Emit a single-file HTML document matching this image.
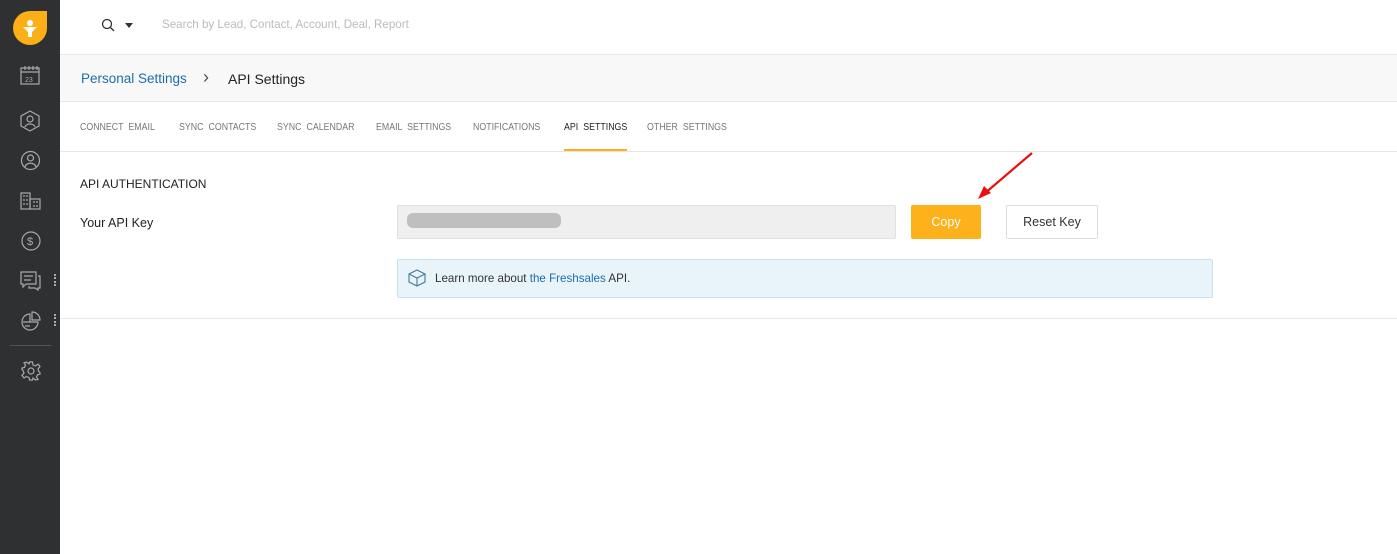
<!DOCTYPE html>
<html><head><meta charset="utf-8"><style>
*{box-sizing:border-box;margin:0;padding:0}
body{width:1397px;height:554px;overflow:hidden;font-family:"Liberation Sans",sans-serif;background:#fff;position:relative;color:#333}
.sb{position:absolute;left:0;top:0;width:60px;height:554px;background:#2f3031}
.sb svg{position:absolute}
.top{position:absolute;left:60px;top:0;right:0;height:55px;border-bottom:1px solid #e8e8e8}
.crumb{position:absolute;left:60px;top:55px;right:0;height:47px;background:#f8f8f8;border-bottom:1px solid #e6e6e6}
.tabs{position:absolute;left:60px;top:102px;right:0;height:50px;border-bottom:1px solid #e6e6e6}
.tab{position:absolute;top:20px;font-size:10px;color:#777;word-spacing:3px;transform:scaleX(0.88);transform-origin:0 0;white-space:nowrap}
.t{position:absolute;white-space:nowrap}
</style></head><body>
<div class="sb">
<svg style="left:13px;top:11px" width="34" height="34" viewBox="0 0 34 34"><path d="M17 0H34V17A17 17 0 1 1 17 0Z" fill="#fcaf17"/><circle cx="17" cy="12" r="3" fill="#fff"/><path d="M10 16H24L19 21V26H15V21Z" fill="#fff"/></svg>
<svg style="left:20px;top:64px" width="20" height="22" fill="none" stroke="#aaa" stroke-width="1.2"><rect x="1" y="4" width="18" height="16"/><path d="M1 8H19M5 2V6M9 2V6M13 2V6M17 2V6"/><text x="5" y="18" font-size="7" fill="#aaa" stroke="none">23</text></svg>
<svg style="left:20px;top:110px" width="20" height="22" fill="none" stroke="#aaa" stroke-width="1.2"><path d="M10 1L19 6V16L10 21L1 16V6Z"/><circle cx="10" cy="9" r="3"/><path d="M5 17C6 13 14 13 15 17"/></svg>
<svg style="left:20px;top:150px" width="21" height="21" fill="none" stroke="#aaa" stroke-width="1.2"><circle cx="10.5" cy="10.5" r="9"/><circle cx="10.5" cy="8" r="3"/><path d="M5 17C6 12 15 12 16 17"/></svg>
<svg style="left:20px;top:192px" width="21" height="18" fill="none" stroke="#aaa" stroke-width="1.2"><rect x="1" y="1" width="9" height="16"/><rect x="10" y="7" width="10" height="10"/><path d="M3 4h2M6 4h2M3 8h2M6 8h2M3 12h2M6 12h2M13 10h2M16 10h2M13 14h2M16 14h2"/></svg>
<svg style="left:21px;top:231px" width="20" height="20" fill="none" stroke="#aaa" stroke-width="1.2"><circle cx="10" cy="10" r="9"/><text x="6" y="14" font-size="11" fill="#aaa" stroke="none">$</text></svg>
<svg style="left:20px;top:271px" width="22" height="20" fill="none" stroke="#aaa" stroke-width="1.2"><path d="M1 1H16V13H6L3 16V13H1Z"/><path d="M4 5H13M4 9H11M18 5H20V17H18V19L15 17H9V15"/></svg>
<svg style="left:20px;top:310px" width="22" height="22" fill="none" stroke="#aaa" stroke-width="1.2"><path d="M10 4A8 8 0 1 0 18 12H10Z"/><path d="M12 2A8 8 0 0 1 20 10H12Z"/><path d="M3 12H10M5 16H10"/></svg>
<div style="position:absolute;left:54px;top:274px;width:2px;height:12px;border-left:2px dotted #aaa"></div>
<div style="position:absolute;left:54px;top:314px;width:2px;height:12px;border-left:2px dotted #aaa"></div>
<div style="position:absolute;left:10px;top:345px;width:41px;height:1px;background:#555"></div>
<svg style="left:21px;top:361px" width="20" height="20" fill="none" stroke="#aaa" stroke-width="1.2"><circle cx="10" cy="10" r="3"/><path d="M8.5 1H11.5L12 4L14.5 5L17 3.2L19 5.5L17 8L17.8 10.5L19 11.5V13L16.5 13.8L15.5 16L17 18.5L14.5 19L12 17L11.5 19H8.5L8 16.5L5.5 15.5L3 17L1 14.5L3 12L2.3 10L1 8.5V7L3.5 6.5L4.5 4L3 1.8L5.5 1L8 3Z"/></svg>
</div>
<div class="top">
<svg style="position:absolute;left:41px;top:18px" width="14" height="14" fill="none" stroke="#333" stroke-width="1.3"><circle cx="6" cy="6" r="4.5"/><path d="M9.5 9.5L13 13"/></svg>
<div style="position:absolute;left:65px;top:23px;border:4px solid transparent;border-top:5px solid #333;border-bottom:0"></div>
<div class="t" style="left:102px;top:18px;font-size:11.6px;color:#bbb">Search by Lead, Contact, Account, Deal, Report</div>
</div>
<div class="crumb">
<div class="t" style="left:21px;top:16px;font-size:13.5px;color:#1b6fa8">Personal Settings</div>
<div class="t" style="left:143px;top:12px;font-size:18px;color:#555">&#8250;</div>
<div class="t" style="left:168px;top:16px;font-size:14px;color:#222">API Settings</div>
</div>
<div class="tabs">
<span class="tab" style="left:20px">CONNECT EMAIL</span>
<span class="tab" style="left:119px">SYNC CONTACTS</span>
<span class="tab" style="left:217px">SYNC CALENDAR</span>
<span class="tab" style="left:316px">EMAIL SETTINGS</span>
<span class="tab" style="left:413px">NOTIFICATIONS</span>
<span class="tab" style="left:504px;color:#222">API SETTINGS</span>
<span class="tab" style="left:587px">OTHER SETTINGS</span>
<div style="position:absolute;left:504px;top:47px;width:63px;height:2px;background:#fcaf17"></div>
</div>
<div class="t" style="left:80px;top:177px;font-size:12px;color:#222">API AUTHENTICATION</div>
<div class="t" style="left:80px;top:216px;font-size:12.5px;color:#222">Your API Key</div>
<div style="position:absolute;left:397px;top:205px;width:499px;height:34px;background:#efefef;border:1px solid #e0e0e0;border-radius:2px"></div>
<div style="position:absolute;left:407px;top:213px;width:154px;height:15px;background:#bfbfbf;border-radius:6px"></div>
<div style="position:absolute;left:911px;top:205px;width:70px;height:34px;background:#fdb11a;border-radius:2px;color:#fff;font-size:12.5px;text-align:center;line-height:34px">Copy</div>
<div style="position:absolute;left:1006px;top:205px;width:92px;height:34px;background:#fff;border:1px solid #ddd;border-radius:2px;color:#333;font-size:12.5px;text-align:center;line-height:32px">Reset Key</div>
<div style="position:absolute;left:397px;top:259px;width:816px;height:39px;background:#e8f3fa;border:1px solid #c9e2ef;border-radius:2px"></div>
<svg style="position:absolute;left:408px;top:269px" width="18" height="18" fill="none" stroke="#447a99" stroke-width="1.1"><path d="M9 1L17 5V13L9 17L1 13V5Z M1 5L9 9L17 5M9 9V17"/></svg>
<div class="t" style="left:435px;top:272px;font-size:11.6px;color:#333">Learn more about <span style="color:#1b6fa8">the Freshsales</span> API.</div>
<div style="position:absolute;left:60px;top:318px;right:0;height:1px;background:#e8e8e8"></div>
<svg style="position:absolute;left:975px;top:150px" width="62" height="52"><path d="M57 3L9 44" stroke="#e81010" stroke-width="2.2"/><path d="M3 49L9 36L16 43Z" fill="#e81010"/></svg>
</body></html>
